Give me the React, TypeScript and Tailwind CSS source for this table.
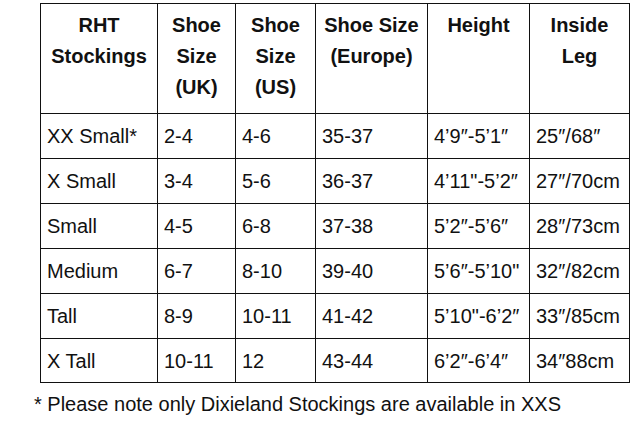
import React from 'react';

const rows: string[][] = [
  ['XX Small*', '2-4', '4-6', '35-37', '4\u20199\u2033-5\u20191\u2033', '25\u2033/68\u2033'],
  ['X Small', '3-4', '5-6', '36-37', '4\u201911"-5\u20192\u2033', '27\u2033/70cm'],
  ['Small', '4-5', '6-8', '37-38', '5\u20192\u2033-5\u20196\u2033', '28\u2033/73cm'],
  ['Medium', '6-7', '8-10', '39-40', '5\u20196\u2033-5\u201910"', '32\u2033/82cm'],
  ['Tall', '8-9', '10-11', '41-42', '5\u201910"-6\u20192\u2033', '33\u2033/85cm'],
  ['X Tall', '10-11', '12', '43-44', '6\u20192\u2033-6\u20194\u2033', '34\u203388cm'],
];

const widths = ['w-[117px]', 'w-[78px]', 'w-[80px]', 'w-[112px]', 'w-[102px]', 'w-[100px]'];

export default function App() {
  return (
    <div className="w-[636px] h-[433px] bg-white text-[#111] font-['Liberation_Sans',Arial,sans-serif] text-[20px]">
      <div className="pt-[3px] pl-[40px]">
        <table className="table-fixed border-collapse w-[589px]">
          <colgroup>
            {widths.map((w, i) => (
              <col key={i} className={w} />
            ))}
          </colgroup>
          <thead>
            <tr className="h-[110px]">
              <th className="border border-[#111] align-top text-center font-bold leading-[31px] pt-[6px] px-1">
                RHT<br />Stockings
              </th>
              <th className="border border-[#111] align-top text-center font-bold leading-[31px] pt-[6px] px-1">
                Shoe<br />Size<br />(UK)
              </th>
              <th className="border border-[#111] align-top text-center font-bold leading-[31px] pt-[6px] px-1">
                Shoe<br />Size<br />(US)
              </th>
              <th className="border border-[#111] align-top text-center font-bold leading-[31px] pt-[6px] px-1">
                Shoe Size<br />(Europe)
              </th>
              <th className="border border-[#111] align-top text-center font-bold leading-[31px] pt-[6px] px-1">
                Height
              </th>
              <th className="border border-[#111] align-top text-center font-bold leading-[31px] pt-[6px] px-1">
                Inside<br />Leg
              </th>
            </tr>
          </thead>
          <tbody>
            {rows.map((r, i) => (
              <tr key={i} className={i === rows.length - 1 ? 'h-[44px]' : 'h-[45px]'}>
                {r.map((c, j) => (
                  <td key={j} className="border border-[#111] align-middle text-left pl-[6px] pr-0 leading-6 whitespace-nowrap">
                    {c}
                  </td>
                ))}
              </tr>
            ))}
          </tbody>
        </table>
      </div>
      <p className="pl-[34px] mt-[6px] leading-[30px]">
        * Please note only Dixieland Stockings are available in XXS
      </p>
    </div>
  );
}
